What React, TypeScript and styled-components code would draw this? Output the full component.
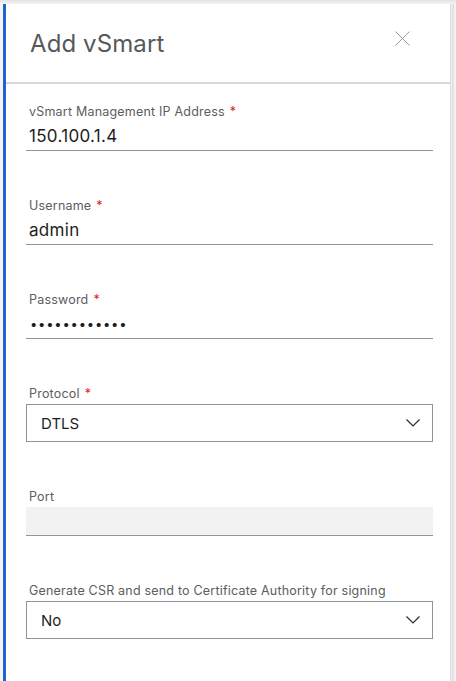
import styled, {createGlobalStyle} from 'styled-components';

const GlobalStyle = createGlobalStyle`
    html, body {
        margin: 0;
        padding: 0;
        background: #ebebeb;
        font-family: Inter, "Noto Sans", sans-serif;
    }
`;

const ChevronDown = () => (
    <svg width="14" height="8" viewBox="0 0 14 8" fill="none">
        <polyline points="0.5,0.5 7,7 13.5,0.5" stroke="#2b2b2b" strokeWidth="1.2" />
    </svg>
);

const CloseIcon = () => (
    <svg width="15" height="15" viewBox="0 0 15 15" fill="none">
        <path d="M0.5 0.5 L14.5 14.5 M14.5 0.5 L0.5 14.5" stroke="#9a9a9a" strokeWidth="1" />
    </svg>
);

type FieldProps = {
    label: string;
    required?: boolean;
    children: React.ReactNode;
    boxed?: boolean;
};

const Field = ({label, required, children, boxed}: FieldProps) => (
    <FieldWrap $boxed={boxed}>
        <Label>
            {label}
            {required && <Star>*</Star>}
        </Label>
        {children}
    </FieldWrap>
);

const App = () => {
    return (
        <>
            <GlobalStyle />
            <Page>
                <Panel>
                    <Header>
                        <Title>Add vSmart</Title>
                        <CloseButton>
                            <CloseIcon />
                        </CloseButton>
                    </Header>

                    <Form>
                        <Field label="vSmart Management IP Address" required>
                            <LineInput>150.100.1.4</LineInput>
                        </Field>

                        <Field label="Username" required>
                            <LineInput>admin</LineInput>
                        </Field>

                        <Field label="Password" required>
                            <LineInput>
                                <Dots>••••••••••••</Dots>
                            </LineInput>
                        </Field>

                        <Field label="Protocol" required boxed>
                            <Select>
                                <span>DTLS</span>
                                <ChevronDown />
                            </Select>
                        </Field>

                        <Field label="Port" boxed>
                            <DisabledInput />
                        </Field>

                        <Field label="Generate CSR and send to Certificate Authority for signing" boxed>
                            <Select>
                                <span>No</span>
                                <ChevronDown />
                            </Select>
                        </Field>
                    </Form>
                </Panel>
            </Page>
        </>
    );
};

export default App;

const Page = styled.div`
    width: 456px;
    height: 681px;
    padding-top: 4px;
    padding-left: 3px;
    box-sizing: border-box;
    overflow: hidden;
    background: linear-gradient(#e4e4e4, #f4f4f4 4px);
`;

const Panel = styled.div`
    width: 448px;
    height: 677px;
    box-sizing: border-box;
    background: #ffffff;
    border-left: 3px solid #2063d3;
    border-right: 1px solid #dcdcdc;
    box-shadow: 1px 0 0 #f0f0f0, 3px 0 0 #e2e2e2;
`;

const Header = styled.div`
    height: 78px;
    display: flex;
    align-items: center;
    justify-content: space-between;
    padding: 0 40px 0 24px;
    border-bottom: 2px solid #d5d9de;
`;

const Title = styled.h1`
    margin: 0;
    font-size: 24px;
    font-weight: 400;
    color: #58595b;
    letter-spacing: 0.1px;
`;

const CloseButton = styled.div`
    display: flex;
    margin-top: -10px;
`;

const Form = styled.div`
    display: flex;
    flex-direction: column;
    gap: 48px;
    padding: 21px 17px 0 20px;
`;

const FieldWrap = styled.div<{$boxed?: boolean}>`
    display: flex;
    flex-direction: column;
    gap: ${p => (p.$boxed ? '3px' : '0')};
`;

const Label = styled.div`
    height: 14px;
    line-height: 14px;
    font-size: 12.5px;
    color: #5a5d61;
    padding-left: 3px;
    letter-spacing: 0.2px;
`;

const Star = styled.span`
    color: #e2231a;
    margin-left: 5px;
`;

const LineInput = styled.div`
    height: 28px;
    box-sizing: content-box;
    padding: 3px 3px 0;
    display: flex;
    align-items: center;
    font-size: 17px;
    letter-spacing: 0.3px;
    color: #1d1d1d;
    border-bottom: 1px solid #8d949c;
`;

const Dots = styled.span`
    font-size: 13px;
    letter-spacing: 0.8px;
    padding-left: 1px;
`;

const Select = styled.div`
    height: 36px;
    display: flex;
    align-items: center;
    justify-content: space-between;
    padding: 0 12px 0 14px;
    border: 1px solid #8d949c;
    font-size: 15px;
    color: #1d1d1d;
`;

const DisabledInput = styled.div`
    height: 28px;
    background: #f2f2f2;
    border-bottom: 1px solid #8d949c;
`;
